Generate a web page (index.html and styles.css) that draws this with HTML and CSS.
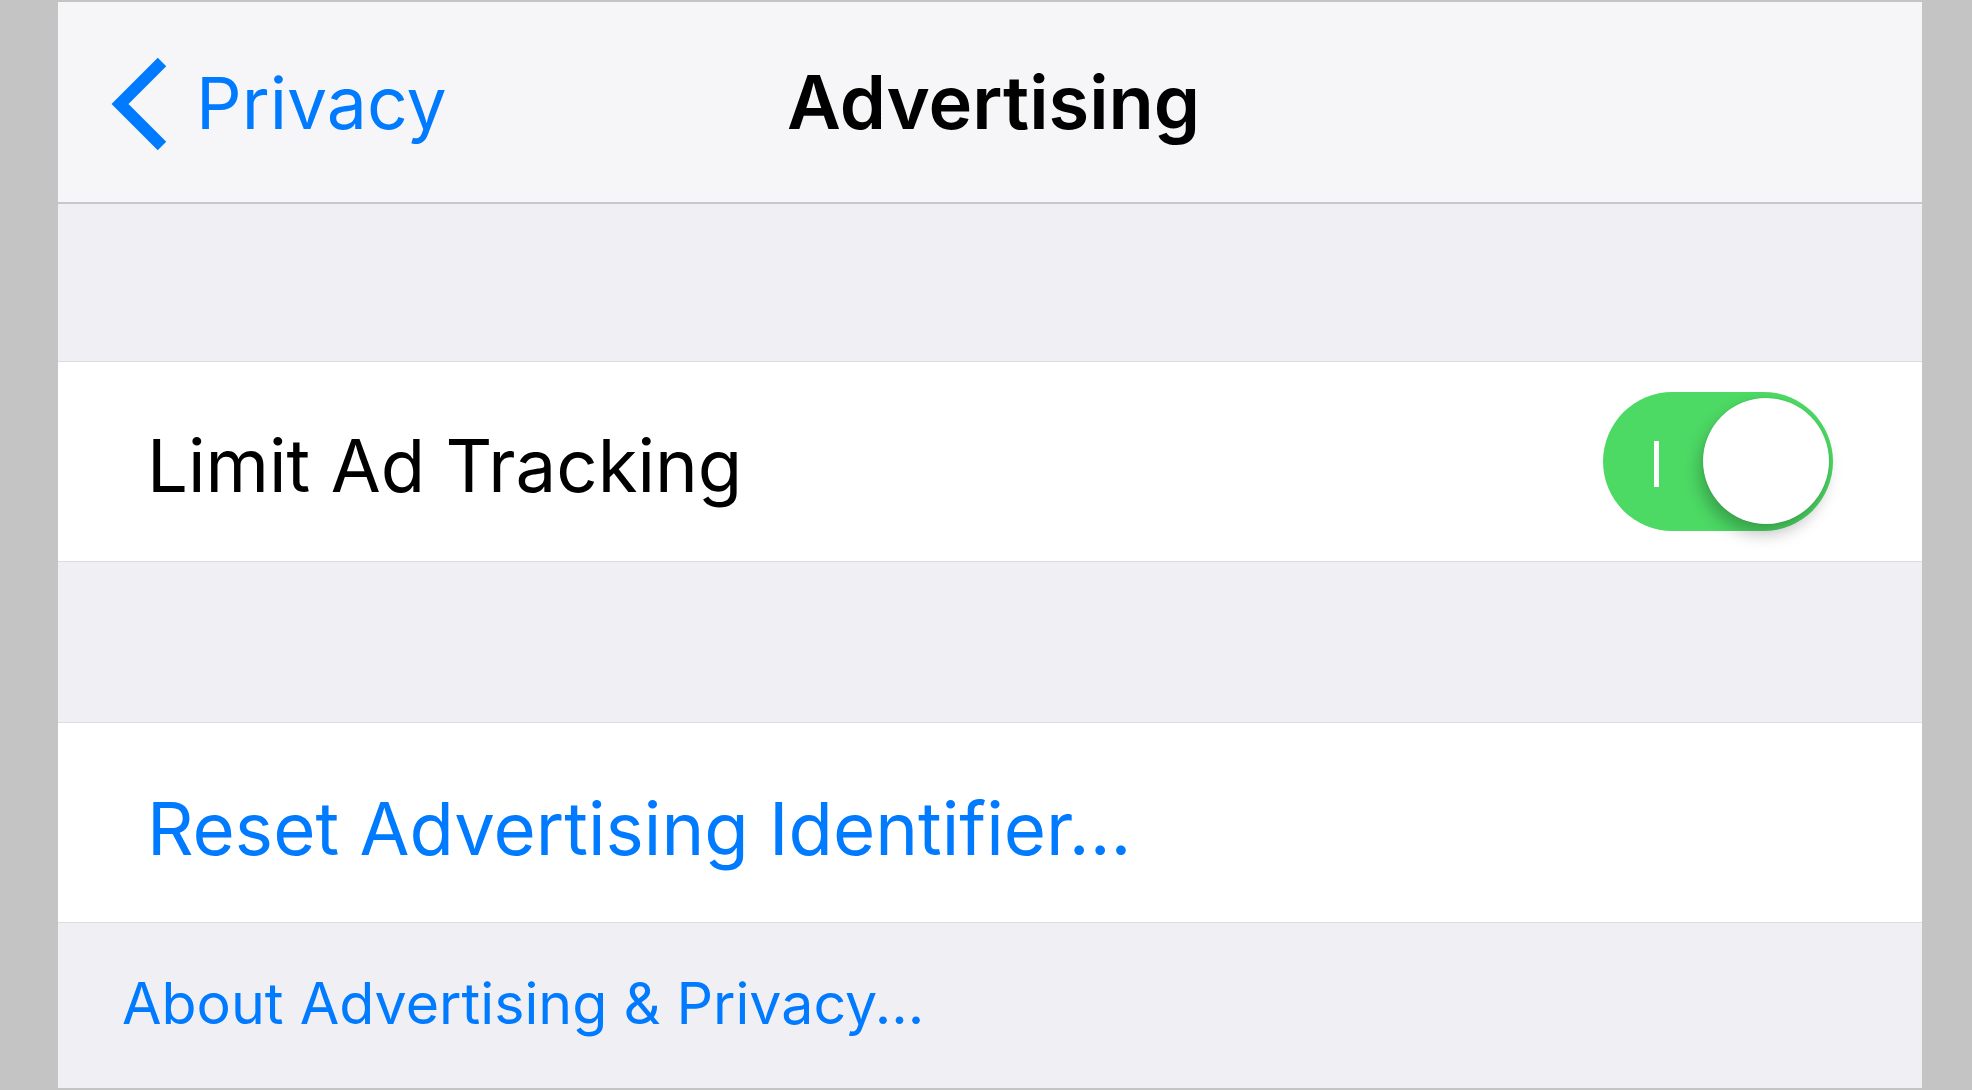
FILE: index.html
```html
<!DOCTYPE html>
<html lang="en">
<head>
<meta charset="utf-8">
<title>Advertising</title>
<link rel="stylesheet" href="styles.css">
</head>
<body>
<div class="frame">
  <div class="screen">
    <header class="nav">
      <div class="back">
        <svg class="chev" width="64" height="100" viewBox="0 0 64 100">
          <polyline points="54,8 12,50 54,92" fill="none" stroke="#007aff" stroke-width="12" stroke-linejoin="miter"/>
        </svg>
        <span class="back-label">Privacy</span>
      </div>
      <div class="title">Advertising</div>
    </header>
    <div class="gap"></div>
    <div class="row">
      <span class="row-label">Limit Ad Tracking</span>
      <div class="toggle"><span class="on-mark"></span><span class="knob"></span></div>
    </div>
    <div class="gap gap2"></div>
    <div class="row row-reset">
      <span class="row-link">Reset Advertising Identifier...</span>
    </div>
    <div class="footer">
      <span class="footer-link">About Advertising &amp; Privacy...</span>
    </div>
  </div>
</div>
</body>
</html>
```

FILE: styles.css
```css
html, body {
  margin: 0;
  padding: 0;
  background: #c4c4c4;
}
body {
  width: 1972px;
  height: 1090px;
  overflow: hidden;
  font-family: Inter, "Noto Sans", sans-serif;
}
.frame {
  padding: 2px 50px 2px 58px;
  height: 1086px;
}
.screen {
  width: 1864px;
  height: 1086px;
  background: #efeff4;
  display: flex;
  flex-direction: column;
}
.nav {
  height: 200px;
  background: #f6f6f8;
  border-bottom: 2px solid #c8c8cc;
  position: relative;
  display: flex;
  align-items: center;
}
.back {
  display: flex;
  align-items: center;
  margin-left: 50px;
  gap: 24px;
  color: #007aff;
}
.chev {
  display: block;
  margin-top: 4px;
}
.back-label {
  font-size: 71.5px;
  margin-top: 2px;
}
.title {
  position: absolute;
  left: 729px;
  top: 55px;
  font-size: 74px;
  font-weight: 600;
  color: #000;
}
.gap {
  height: 157px;
}
.gap2 {
  height: 160px;
}
.row {
  height: 199px;
  background: #fff;
  border-top: 1px solid #dcdce0;
  border-bottom: 1px solid #dcdce0;
  display: flex;
  align-items: center;
  justify-content: space-between;
  padding: 0 89px 0 89px;
}
.row-label {
  font-size: 72.5px;
  color: #000;
  margin-top: 8px;
}
.row-link {
  font-size: 72.5px;
  color: #007aff;
  margin-top: 12px;
}
.toggle {
  width: 230px;
  height: 139px;
  border-radius: 70px;
  background: #4cd964;
  position: relative;
  margin-top: 0px;
}
.on-mark {
  position: absolute;
  left: 51px;
  top: 49px;
  width: 5px;
  height: 46px;
  background: #fff;
}
.knob {
  position: absolute;
  right: 4px;
  top: 6px;
  width: 126px;
  height: 126px;
  border-radius: 50%;
  background: #fff;
  box-shadow: -3px 10px 16px rgba(0,0,0,0.25), 0 0 2px rgba(0,0,0,0.12);
}
.footer {
  flex: 1;
  padding: 45px 0 0 64px;
}
.footer-link {
  font-size: 57.3px;
  color: #007aff;
}
```
